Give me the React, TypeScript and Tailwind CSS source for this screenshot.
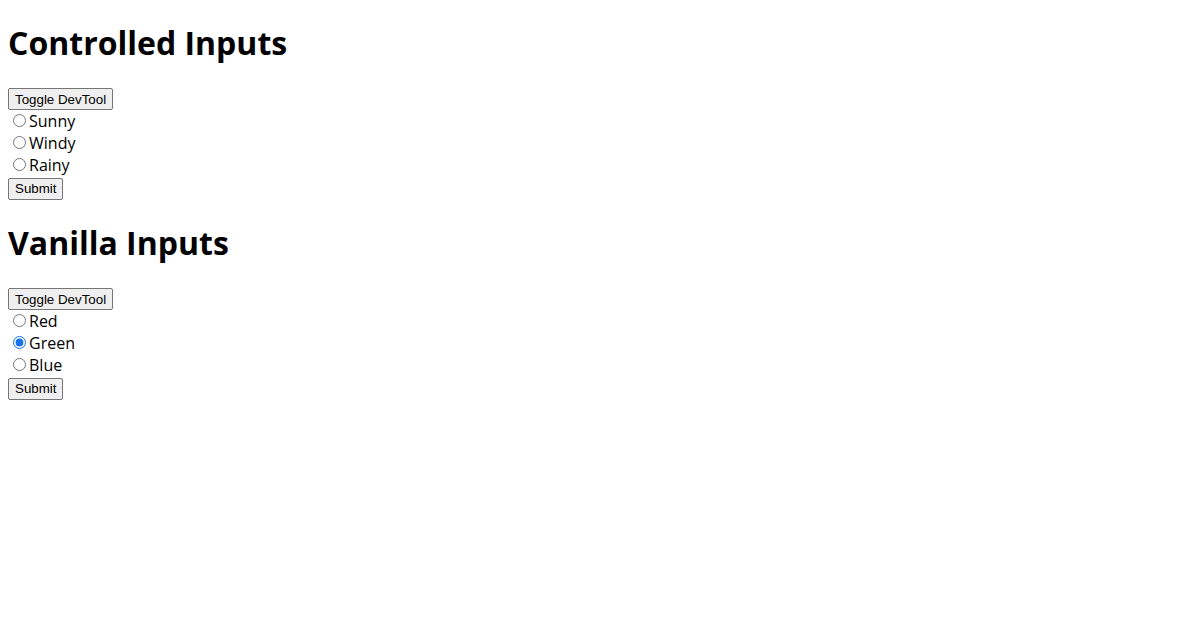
const btn =
  "font-['Liberation_Sans',Arial,sans-serif] text-[13.333px] leading-[normal] px-[6px] py-[2.5px] border border-[#767676] bg-[#efefef] rounded-[2px] text-black";

function Group({ title, name, options, checked }: { title: string; name: string; options: string[]; checked?: string }) {
  return (
    <section>
      <h1 className="my-[21.44px] text-[32px] font-bold leading-[normal]">{title}</h1>
      <div className="pt-px">
        <button className={btn}>Toggle DevTool</button>
      </div>
      <form onSubmit={(e) => e.preventDefault()}>
        {options.map((o) => (
          <div key={o} className="h-[22px]">
            <label>
              <input
                type="radio"
                name={name}
                value={o}
                defaultChecked={o === checked}
                className="m-[3px_3px_0px_5px] accent-[#1a73e8]"
              />
              {o}
            </label>
          </div>
        ))}
        <button type="submit" className={btn}>
          Submit
        </button>
      </form>
    </section>
  );
}

export default function App() {
  return (
    <div className="m-2 bg-white font-['Open_Sans',sans-serif] text-base leading-[normal] text-black">
      <Group title="Controlled Inputs" name="weather" options={['Sunny', 'Windy', 'Rainy']} />
      <Group title="Vanilla Inputs" name="color" options={['Red', 'Green', 'Blue']} checked="Green" />
    </div>
  );
}
